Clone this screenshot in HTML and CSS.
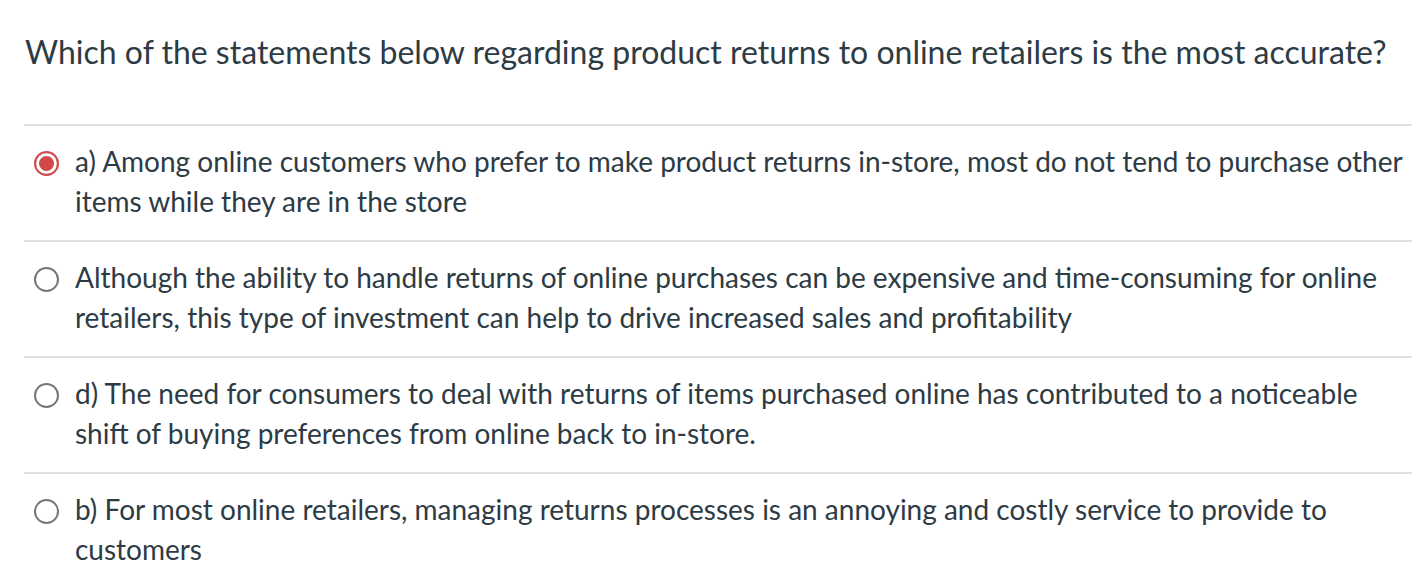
FILE: index.html
```html
<!DOCTYPE html>
<html>
<head>
<meta charset="utf-8">
<link rel="stylesheet" href="styles.css">
</head>
<body>
<div class="question">
  <div class="question-text">Which of the statements below regarding product returns to online retailers is the most accurate?</div>
  <div class="answers">
    <div class="answer">
      <span class="radio checked"></span>
      <div class="answer-text">a) Among online customers who prefer to make product returns in-store, most do not tend to purchase other items while they are in the store</div>
    </div>
    <div class="answer">
      <span class="radio"></span>
      <div class="answer-text">Although the ability to handle returns of online purchases can be expensive and time-consuming for online retailers, this type of investment can help to drive increased sales and profitability</div>
    </div>
    <div class="answer">
      <span class="radio"></span>
      <div class="answer-text">d) The need for consumers to deal with returns of items purchased online has contributed to a noticeable shift of buying preferences from online back to in-store.</div>
    </div>
    <div class="answer">
      <span class="radio"></span>
      <div class="answer-text">b) For most online retailers, managing returns processes is an annoying and costly service to provide to customers</div>
    </div>
  </div>
</div>
</body>
</html>
```
FILE: styles.css
```css
html, body {
  margin: 0;
  padding: 0;
  background: #ffffff;
}
body {
  font-family: Lato, "Open Sans", sans-serif;
  color: #2d3b45;
}
.question {
  padding: 0 12px 0 24px;
}
.question-text {
  font-size: 32px;
  line-height: 40px;
  padding-top: 32px;
  padding-bottom: 52px;
  padding-left: 1px;
}
.answer {
  border-top: 2px solid #dddfe0;
  display: flex;
  align-items: flex-start;
  padding: 15px 0 19px 0;
}
.answer-text {
  font-size: 28px;
  line-height: 40px;
  flex: 1;
}
.radio {
  flex: none;
  box-sizing: border-box;
  width: 25px;
  height: 25px;
  border-radius: 50%;
  border: 2px solid #6f777d;
  margin: 10px 16px 0 10px;
  background: #fff;
}
.radio.checked {
  border: 2px solid #d04848;
  box-shadow: inset 0 0 0 3px #fff, inset 0 0 0 20px #d04848;
}
```
